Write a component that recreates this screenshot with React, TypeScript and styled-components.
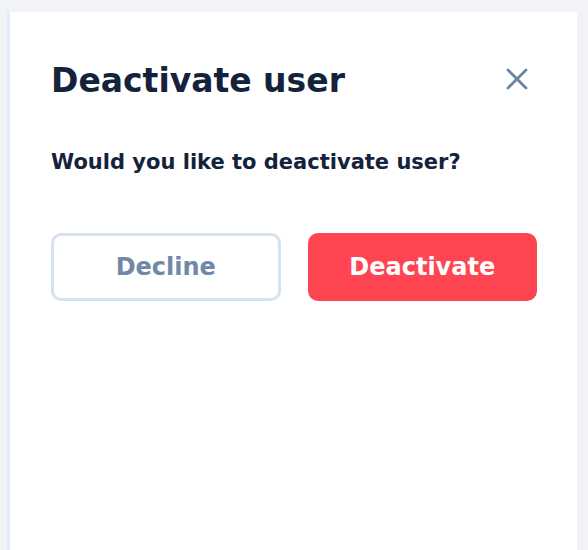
import React from "react";
import styled, { createGlobalStyle } from "styled-components";

const GlobalStyle = createGlobalStyle`
  html, body {
    margin: 0;
    padding: 0;
    background: #f1f3f6;
    height: 100%;
  }
  #root {
    min-height: 100%;
  }
  * { box-sizing: border-box; }
`;

const FONT = `"DejaVu Sans", "Open Sans", sans-serif`;

const Page = styled.div`
  height: 550px;
  padding: 12px 11px 0 7px;
  display: flex;
  overflow: hidden;
`;

const Panel = styled.div`
  flex: 1;
  background: #ffffff;
  border-left: 3px solid #e4ecf8;
  padding: 49px 40px 0 41px;
  display: flex;
  flex-direction: column;
  font-family: ${FONT};
`;

const Header = styled.div`
  display: flex;
  align-items: flex-start;
  justify-content: space-between;
`;

const Title = styled.h1`
  margin: 0;
  font-size: 33px;
  line-height: 40px;
  font-weight: 700;
  color: #14223b;
`;

const CloseButton = styled.button`
  width: 40px;
  height: 36px;
  border: none;
  background: transparent;
  padding: 0;
  display: flex;
  align-items: center;
  justify-content: center;
  cursor: pointer;
`;

const Message = styled.p`
  margin: 48px 0 0;
  font-size: 21px;
  line-height: 26px;
  font-weight: 700;
  color: #14223b;
`;

const Actions = styled.div`
  margin-top: 58px;
  display: grid;
  grid-template-columns: 1fr 1fr;
  gap: 27px;
`;

const ActionButton = styled.button<{ $variant: "outline" | "danger" }>`
  height: 68px;
  border-radius: 10px;
  font-family: ${FONT};
  font-size: 24px;
  font-weight: 700;
  cursor: pointer;
  border: 3px solid ${(p) => (p.$variant === "danger" ? "#ff4551" : "#d6e2ee")};
  background: ${(p) => (p.$variant === "danger" ? "#ff4551" : "#ffffff")};
  color: ${(p) => (p.$variant === "danger" ? "#ffffff" : "#7189a7")};
`;

const CloseIcon = () => (
  <svg width="22" height="22" viewBox="0 0 22 22" fill="none">
    <path
      d="M2 2L20 20M20 2L2 20"
      stroke="#6b84a2"
      strokeWidth="2.8"
      strokeLinecap="round"
    />
  </svg>
);

export default function App() {
  return (
    <>
      <GlobalStyle />
      <Page>
        <Panel>
          <Header>
            <Title>Deactivate user</Title>
            <CloseButton aria-label="Close">
              <CloseIcon />
            </CloseButton>
          </Header>
          <Message>Would you like to deactivate user?</Message>
          <Actions>
            <ActionButton $variant="outline">Decline</ActionButton>
            <ActionButton $variant="danger">Deactivate</ActionButton>
          </Actions>
        </Panel>
      </Page>
    </>
  );
}
